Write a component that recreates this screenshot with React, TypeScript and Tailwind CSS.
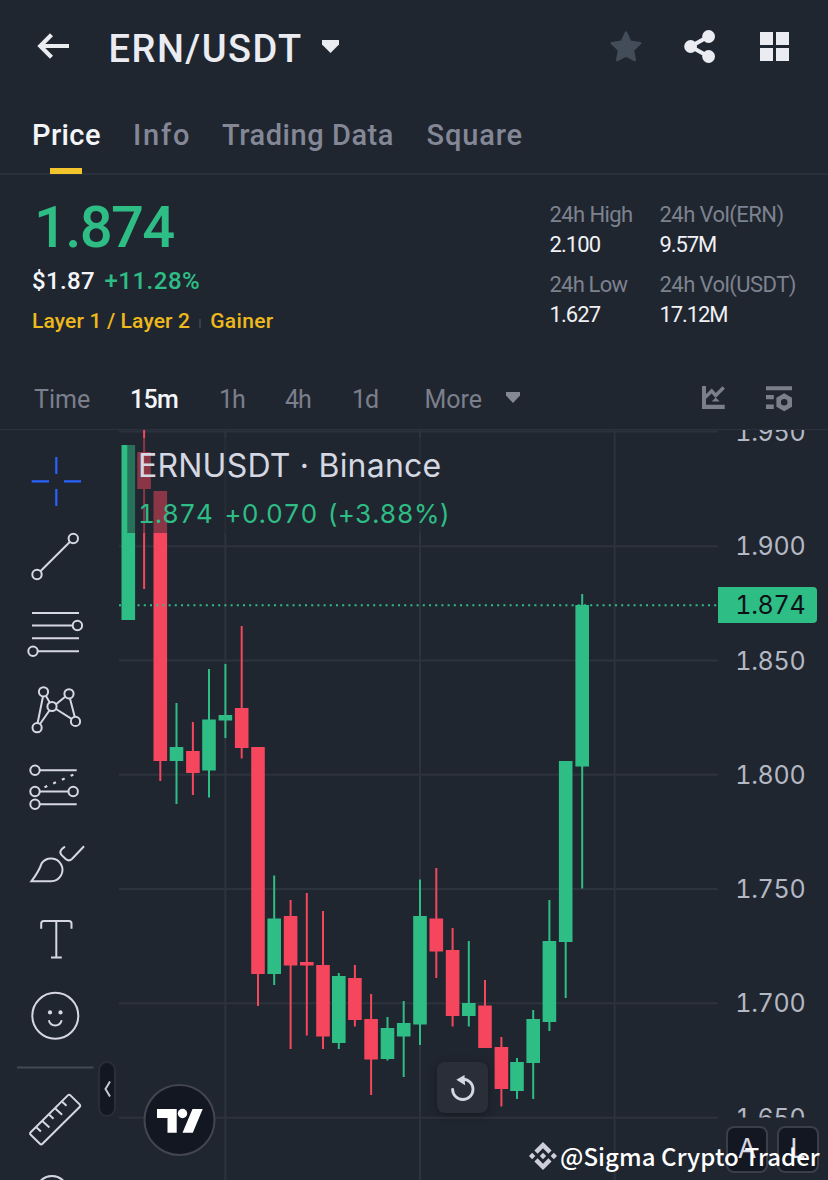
import React from "react";
import { SiBinance } from "react-icons/si";

const GREEN = "#2ebd85";
const RED = "#f6465d";

type Candle = [x: number, high: number, top: number, bottom: number, low: number, up: boolean];

const candles: Candle[] = [
  [128.3, 445, 445, 620, 620, true],
  [144.1, 420, 452, 489, 589, false],
  [160.3, 491, 491, 761, 781, false],
  [176.5, 703, 747, 761, 804, true],
  [192.9, 722, 751, 773, 795, false],
  [209, 669, 719.5, 770.5, 797.5, true],
  [225.4, 664, 715, 720.5, 738, true],
  [241.7, 626, 708, 748, 758.5, false],
  [258, 747, 747, 974, 1006, false],
  [274.2, 875.5, 918.5, 974, 985, true],
  [290.6, 900, 916, 965.5, 1049, false],
  [306.8, 893, 962, 965.5, 1035.5, false],
  [323, 911, 965, 1036.5, 1049, false],
  [338.8, 973, 976, 1043, 1049, true],
  [354.9, 965, 978, 1020, 1026.5, false],
  [371.1, 994, 1019, 1059.5, 1095, false],
  [387.5, 1017, 1028, 1059, 1060.5, true],
  [403.7, 1001, 1023, 1036.5, 1077, true],
  [420, 879.5, 916, 1024.5, 1045, true],
  [436.3, 868, 918.5, 951.5, 978, false],
  [452.6, 928, 950, 1016, 1026.5, false],
  [468.8, 941, 1003, 1016, 1026.5, true],
  [485, 980, 1005.5, 1048, 1048, false],
  [501.4, 1037, 1047, 1089, 1106.5, false],
  [517, 1058, 1062, 1091, 1099, true],
  [533.2, 1010, 1019, 1063, 1099, true],
  [549.4, 900, 941, 1022, 1031, true],
  [565.7, 761, 761, 942, 998, true],
  [582.2, 594, 605, 766.5, 888.5, true],
];

const axis = [
  { label: "1.950", line: 431.5 },
  { label: "1.900", line: 546.3 },
  { label: "1.850", line: 660.5 },
  { label: "1.800", line: 774.7 },
  { label: "1.750", line: 889 },
  { label: "1.700", line: 1003.3 },
  { label: "1.650", line: 1117.7 },
];

function Header() {
  return (
    <header className="flex h-24 shrink-0 items-center">
      <svg width="32" height="26" viewBox="37 33 32 26" className="ml-[37px] -mt-1" fill="none" stroke="#eaecef" strokeWidth="4.2">
        <path d="M51.5 34.8 40.3 46l11.2 11.2M40.3 46H69" />
      </svg>
      <h1 className="ml-[39.5px] w-[191px] whitespace-nowrap pt-px text-[38px] font-medium leading-none tracking-[1.5px] text-[#eaecf2]">ERN/USDT</h1>
      <svg width="17" height="13" viewBox="0 0 17 13" className="ml-[22.5px] -mt-1" fill="#eaecf2">
        <path d="M0 0h17v4.5L8.5 13 0 4.5z" />
      </svg>
      <div className="ml-auto mr-[39px] -mt-[3px] flex items-center">
        <svg width="32" height="32" viewBox="0 0 32 32" fill="#434c59" stroke="#434c59" strokeWidth="2.4" strokeLinejoin="round">
          <path d="M16 1.6l4.3 9.1 10 1.4-7.3 7 1.8 10L16 24.5l-8.8 4.6 1.8-10-7.3-7 10-1.4z" />
        </svg>
        <svg width="32" height="33" viewBox="0 0 32 33" className="ml-[42px]" fill="#eaecf2" stroke="#eaecf2">
          <path d="M6.5 16.5 24.5 6.5M6.5 16.5l18 10" strokeWidth="4.2" />
          <g stroke="none">
            <circle cx="6.6" cy="16.5" r="6.4" />
            <circle cx="24.6" cy="6.5" r="6.4" />
            <circle cx="24.6" cy="26.5" r="6.4" />
          </g>
        </svg>
        <div className="ml-[44.5px] grid grid-cols-2 gap-[3px]">
          <i className="size-[13px] bg-[#eaecf2]" />
          <i className="size-[13px] bg-[#eaecf2]" />
          <i className="size-[13px] bg-[#eaecf2]" />
          <i className="size-[13px] bg-[#eaecf2]" />
        </div>
      </div>
    </header>
  );
}

function Tabs() {
  return (
    <nav className="flex h-[79px] shrink-0 items-center whitespace-nowrap border-b-2 border-[#2a303b] pl-8 text-[29px] font-medium leading-none text-[#848896]">
      <div className="relative flex h-full w-[101px] items-center pt-[2px] tracking-[0.4px] text-[#f4f5f8]">
        Price
        <i className="absolute left-[18px] -bottom-px h-[6px] w-8 bg-[#f3c52c]" />
      </div>
      <span className="w-[89px] pt-[2px] tracking-[1.8px]">Info</span>
      <span className="w-[204.5px] pt-[2px] tracking-[0.55px]">Trading Data</span>
      <span className="pt-[2px] tracking-[0.85px]">Square</span>
    </nav>
  );
}

function Stats() {
  return (
    <section className="flex h-[193px] shrink-0 items-start whitespace-nowrap">
      <div className="pl-8 pt-[22px]">
        <div className="-mr-4 pl-[2px] text-[58px] font-medium leading-[60px] tracking-[-1.7px] text-[#2ebd85]">1.874</div>
        <div className="mt-1 flex text-2xl font-medium leading-10">
          <span className="w-[72.5px] tracking-[0.35px] text-[#f4f5f8]">$1.87</span>
          <span className="tracking-[0.5px] text-[#2ebd85]">+11.28%</span>
        </div>
        <div className="flex items-center text-[21px] font-medium leading-10 text-[#edb91c]">
          <span className="tracking-[0.15px]">Layer 1 / Layer 2</span>
          <i className="ml-[9px] mt-1 h-[9px] w-[2px] bg-[#373e49]" />
          <span className="ml-[9px] tracking-[0.35px]">Gainer</span>
        </div>
      </div>
      <div className="ml-auto flex w-[278.5px] pt-[25px] text-[22px] leading-[30px]">
        <dl className="w-[110px]">
          <dt className="tracking-[-0.6px] text-[#7d828f]">24h High</dt>
          <dd className="tracking-[-0.9px] text-[#f0f1f5]">2.100</dd>
          <dt className="mt-[10px] tracking-[-0.8px] text-[#7d828f]">24h Low</dt>
          <dd className="tracking-[-0.9px] text-[#f0f1f5]">1.627</dd>
        </dl>
        <dl>
          <dt className="tracking-[-0.55px] text-[#7d828f]">24h Vol(ERN)</dt>
          <dd className="tracking-[-1.1px] text-[#f0f1f5]">9.57M</dd>
          <dt className="mt-[10px] tracking-[-0.55px] text-[#7d828f]">24h Vol(USDT)</dt>
          <dd className="tracking-[-1.1px] text-[#f0f1f5]">17.12M</dd>
        </dl>
      </div>
    </section>
  );
}

function Intervals() {
  return (
    <nav className="flex h-[62px] shrink-0 items-center whitespace-nowrap border-b border-[#2c323d] pl-[34px] text-[25px] leading-none text-[#7b7f8b]">
      <span className="w-24 pt-px">Time</span>
      <span className="w-[89px] pt-px font-medium tracking-[-0.7px] text-[#f4f5f8]">15m</span>
      <span className="w-[66px] pt-px tracking-[-1px]">1h</span>
      <span className="w-[67px] pt-px tracking-[-1px]">4h</span>
      <span className="w-[72.5px] pt-px tracking-[-1px]">1d</span>
      <span className="w-[81.5px] pt-px">More</span>
      <svg width="14" height="11" viewBox="0 0 14 11" className="-mt-[3px]" fill="#848894">
        <path d="M0 0h14v3.5L7 11 0 3.5z" />
      </svg>
      <svg width="24" height="24" viewBox="701 386 24 24" className="-mt-[2px] ml-auto" fill="#7b7f8b">
        <path d="M702 386h4v18.7h18.7v4.3H702z" />
        <path d="M705 397.5 711.7 391l4 4.5 8-8" fill="none" stroke="#7b7f8b" strokeWidth="3.4" />
        <path d="m715.7 397.6 4 4h-8z" />
      </svg>
      <svg width="27" height="26" viewBox="766 386 27 26" className="ml-[41px] mr-[35px]" fill="#7b7f8b">
        <path d="M766 386.3h26v4h-26zM766 395h7.8v4.2H766zM766 404.6h7.8v4.4H766z" />
        <path fillRule="evenodd" d="m784.2 393.2 7.8 4.5v9l-7.8 4.5-7.8-4.5v-9zm0 5.7a3.3 3.3 0 1 0 0 6.6 3.3 3.3 0 0 0 0-6.6z" />
      </svg>
    </nav>
  );
}

const tools: { top: number; height: number; art: React.ReactNode }[] = [
  { top: 443, height: 76, art: <path stroke="#2962ff" strokeWidth="2.2" d="M56.3 457v17M56.3 489v17M31.7 481.3H49M64 481.3h17" /> },
  {
    top: 519, height: 77,
    art: <><path d="M40.4 571.2 70 541.8" /><circle cx="37" cy="574.5" r="4.7" /><circle cx="73.3" cy="538.5" r="4.7" /></>,
  },
  {
    top: 596, height: 76,
    art: <><path d="M32 613h47M32 625.5h40.7M32 638.3h47M37.8 651.2H79" /><circle cx="77.4" cy="625.5" r="4.7" /><circle cx="33" cy="651.2" r="4.7" /></>,
  },
  {
    top: 672, height: 77,
    art: (
      <>
        <path d="M43 696.5 37.6 723M46 696l3.6 6.3M40 724l9.6-13.8M56 704.3l9.2-7.6M69.9 698.3l4.8 18.5M56 709l15.6 9.8" />
        <circle cx="43.5" cy="691.8" r="4.6" /><circle cx="69" cy="693.8" r="4.6" /><circle cx="52" cy="706.5" r="4.6" />
        <circle cx="37.1" cy="727.7" r="4.6" /><circle cx="75.5" cy="721.4" r="4.6" />
      </>
    ),
  },
  {
    top: 749, height: 76,
    art: (
      <>
        <path d="M39.7 770.3h37M39.7 791.5h28.6M39.7 804.3h37" />
        <path d="m44.5 787.3 29-12.7" strokeDasharray="3 6.5" strokeWidth="2.2" />
        <circle cx="35" cy="770.3" r="4.7" /><circle cx="35" cy="791.5" r="4.7" /><circle cx="73.2" cy="791.5" r="4.7" /><circle cx="35" cy="804.3" r="4.7" />
      </>
    ),
  },
  {
    top: 825, height: 77,
    art: (
      <>
        <path d="M31.5 881.2H51a11.4 11.4 0 1 0-9.4-17.8c-2.2 7-6 12.3-10.1 17.8z" />
        <path d="M65 846.6c-4.5 2.8-6.2 5.4-3.1 8.8l3.8 3.6c2.4 2 4.2 2 6.5-.2l11.8-12.6" />
      </>
    ),
  },
  { top: 902, height: 76, art: <path d="M41.2 928.7v-5.2q0-2.5 2.5-2.5H69q2.5 0 2.5 2.5v5.2M56.3 921v36.5M51 957.5h10.8" /> },
  {
    top: 978, height: 77,
    art: (
      <>
        <circle cx="55.3" cy="1015.7" r="23" />
        <circle cx="50" cy="1012.4" r="2.1" fill="#d5d7e2" stroke="none" /><circle cx="60.5" cy="1012.4" r="2.1" fill="#d5d7e2" stroke="none" />
        <path d="M48.8 1020.3c1.8 6.9 11 6.9 12.9 0" />
      </>
    ),
  },
  { top: 1055, height: 26, art: <path stroke="#434955" d="M17 1067.6h76.5" /> },
  {
    top: 1081, height: 77,
    art: (
      <>
        <path strokeLinejoin="round" d="M67.8 1095.4q1.3-1.3 2.6 0l9.2 9q1.3 1.3 0 2.6l-37.1 36.8q-1.3 1.3-2.6 0l-9.2-9q-1.3-1.3 0-2.6z" />
        <path d="m36.6 1127.4 4.3 4M42.6 1121.2l6.8 6.2M49.3 1114.7l4.2 4M55.3 1108.5l6.8 6.2M62.2 1101.8l4.3 4" />
      </>
    ),
  },
  { top: 1158, height: 22, art: <circle cx="52" cy="1192" r="16" /> },
];

function Toolbar() {
  return (
    <aside className="relative flex w-[119px] shrink-0 flex-col pt-[13px]">
      {tools.map((t) => (
        <svg key={t.top} width="119" height={t.height} viewBox={`0 ${t.top} 119 ${t.height}`} className="block shrink-0" fill="none" stroke="#d5d7e2" strokeWidth="2">
          {t.art}
        </svg>
      ))}
      <div className="absolute left-[98px] top-[631px] flex h-[56px] w-[18px] items-center justify-center rounded-[9px] border-2 border-[#292e39] bg-[#131722]">
        <svg width="7" height="16" viewBox="0 0 7 16" fill="none" stroke="#c5c8d2" strokeWidth="2">
          <path d="M6 .5 1.5 8 6 15.5" />
        </svg>
      </div>
    </aside>
  );
}

function Chart() {
  return (
    <div className="relative w-[709px] overflow-hidden">
      <svg width="709" height="750" viewBox="119 430 709 750" className="block">
        <g stroke="#2d333d" strokeWidth="2">
          {axis.map((a) => <path key={a.label} d={`M119 ${a.line}H718`} />)}
          <path d="M225.3 430V1180M420 430V1180M614.7 430V1180" />
        </g>
        {candles.map(([x, high, top, bottom, low, up]) => (
          <g key={x} fill={up ? GREEN : RED}>
            <rect x={x - 1} y={high} width="2" height={low - high} />
            <rect x={x - 6.8} y={top} width="13.6" height={bottom - top} />
          </g>
        ))}
        <path d="M119 605.2H717" stroke={GREEN} strokeWidth="2" strokeDasharray="2 4.2" />
        <rect x="127.3" y="438" width="330" height="95" fill="#202630" fillOpacity="0.5" />
        <clipPath id="scale"><rect x="718" y="430" width="110" height="687.5" /></clipPath>
        <g clipPath="url(#scale)" fill="#b4b8c3" fontSize="25" textAnchor="end" className="tracking-[-0.3px] tabular-nums">
          {axis.map((a) => <text key={a.label} x="805.3" y={a.line + 9}>{a.label}</text>)}
        </g>
        <path d="M718 587h95q4 0 4 4v28q0 4-4 4h-95z" fill={GREEN} />
        <text x="805.3" y="614.4" fill="#0d1015" fontSize="25" textAnchor="end" className="tracking-[-0.3px] tabular-nums">1.874</text>
        <circle cx="179.5" cy="1120" r="35" fill="#131722" stroke="#434651" strokeWidth="2" />
        <path fill="#fff" d="M157 1109h19.7v23.7h-9.2V1118H157zM192.5 1109h10.2l-9.9 23.7h-10.3z" />
        <circle cx="182.5" cy="1113.5" r="4.7" fill="#fff" />
      </svg>
      <div className="absolute left-[19px] top-[13px] whitespace-nowrap">
        <div className="text-[32px] leading-[46px] tracking-[0.22px] text-[#d5d7e2]">ERNUSDT · Binance</div>
        <div className="flex text-[26px] leading-[50px] tabular-nums text-[#2ebd85]">
          <span className="w-[86.5px] tracking-[0.1px]">1.874</span>
          <span className="w-[103px] tracking-[0.3px]">+0.070</span>
          <span className="tracking-[0.3px]">(+3.88%)</span>
        </div>
      </div>
      <div className="absolute left-[318px] top-[632px] flex size-[51px] items-center justify-center rounded-lg bg-[#2a2e39] shadow-[0_2px_8px_rgba(0,0,0,0.35)]">
        <svg width="26" height="26" viewBox="450 1075 26 26">
          <path d="M452.6 1089.3a10.2 10.2 0 1 0 10.2-10.2" fill="none" stroke="#d5d7e2" strokeWidth="2.8" strokeLinecap="round" />
          <path d="m456.3 1079.8 8.2-4.8.6 10.2z" fill="#d5d7e2" />
        </svg>
      </div>
      <div className="absolute left-[607px] top-[696px] flex gap-[9px] text-[27px] text-[#d5d7e2]">
        <span className="flex h-[47px] w-[42px] items-center justify-center rounded-lg border-2 border-[#3b3f4a] bg-[#131722]">A</span>
        <span className="flex h-[47px] w-[42px] items-center justify-center rounded-lg border-2 border-[#3b3f4a] bg-[#131722]">L</span>
      </div>
      <div className="absolute left-[410px] top-[711px] flex items-center whitespace-nowrap font-['Noto_Sans_CJK_SC',sans-serif] text-2xl font-medium leading-7 tracking-[0.08px] text-white">
        <SiBinance className="mr-[3px] mt-px size-7 text-[#cdd0dc]" />
        @Sigma Crypto Trader
      </div>
    </div>
  );
}

export default function App() {
  return (
    <div className="flex h-[1180px] w-[828px] flex-col overflow-hidden bg-[#202630] font-[Roboto,sans-serif]">
      <Header />
      <Tabs />
      <Stats />
      <Intervals />
      <main className="flex h-[750px] font-[Inter,sans-serif]">
        <Toolbar />
        <Chart />
      </main>
    </div>
  );
}
